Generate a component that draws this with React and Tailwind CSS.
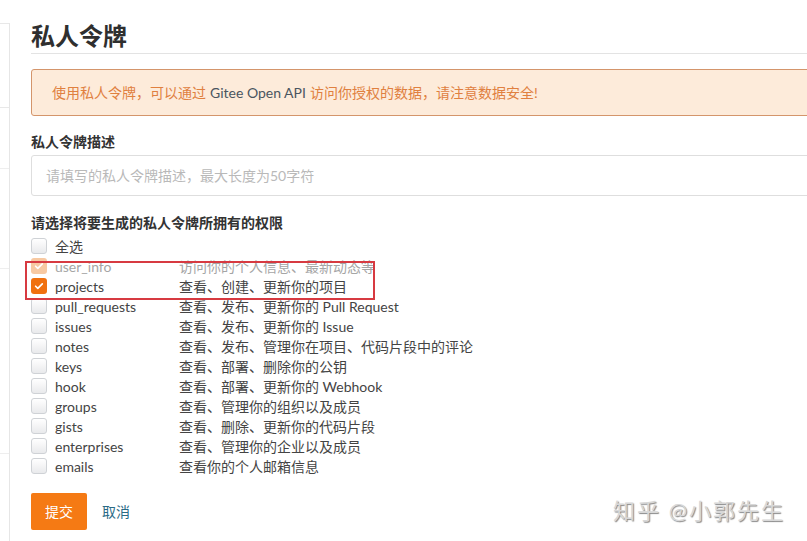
import React from "react";

const scopes = [
  { name: "user_info", desc: "访问你的个人信息、最新动态等", disabled: true, checked: true },
  { name: "projects", desc: "查看、创建、更新你的项目", checked: true },
  { name: "pull_requests", desc: "查看、发布、更新你的 Pull Request" },
  { name: "issues", desc: "查看、发布、更新你的 Issue" },
  { name: "notes", desc: "查看、发布、管理你在项目、代码片段中的评论" },
  { name: "keys", desc: "查看、部署、删除你的公钥" },
  { name: "hook", desc: "查看、部署、更新你的 Webhook" },
  { name: "groups", desc: "查看、管理你的组织以及成员" },
  { name: "gists", desc: "查看、删除、更新你的代码片段" },
  { name: "enterprises", desc: "查看、管理你的企业以及成员" },
  { name: "emails", desc: "查看你的个人邮箱信息" },
];

const Box = ({ checked, disabled }) => {
  if (checked) {
    return (
      <span
        className={`flex h-4 w-4 shrink-0 items-center justify-center rounded-[3px] ${
          disabled ? "bg-[#f7c9a2]" : "bg-[#f0700f]"
        }`}
      >
        <svg viewBox="0 0 16 16" className="h-3 w-3">
          <path
            d="M3.5 8.3l2.9 2.8 6-6"
            fill="none"
            stroke="#fff"
            strokeWidth="2.2"
            strokeLinecap="round"
            strokeLinejoin="round"
          />
        </svg>
      </span>
    );
  }
  return (
    <span className="h-4 w-4 shrink-0 rounded-[3px] border border-[#cfd2d6] bg-gradient-to-b from-white to-[#e9eaec]" />
  );
};

const Row = ({ name, desc, checked, disabled }) => (
  <div className="flex h-5 items-center">
    <Box checked={checked} disabled={disabled} />
    <span className={`ml-2 w-[124px] ${disabled ? "text-[#a5a5a5]" : "text-[#444]"}`}>{name}</span>
    <span className={disabled ? "text-[#a5a5a5]" : "text-[#444]"}>{desc}</span>
  </div>
);

export default function App() {
  return (
    <div
      className="relative flex h-[541px] w-[807px] overflow-hidden bg-white text-[14px]"
      style={{ fontFamily: 'Lato, "Noto Sans CJK SC", sans-serif' }}
    >
      <aside className="mt-[23px] flex w-[10px] shrink-0 flex-col border-r border-[#e6e6e6]">
        <div className="h-[85px] border-y border-[#e8e8e8]" />
        <div className="mt-[60px] h-[100px] border-t border-[#eee]" />
        <div className="h-[185px] border-t border-[#eee]" />
        <div className="border-t border-[#eee]" />
      </aside>

      <main className="relative ml-[21px] flex-1">
        <h1 className="pt-[19px] text-[24px] font-bold leading-[34px] text-[#2f2f2f]">私人令牌</h1>
        <div className="border-b border-[#e3e3e3]" />

        <div className="mt-[15px] -mr-4 flex h-[47px] items-center rounded-[3px] border border-[#d4956b] bg-[#fdebda] pl-[20px] text-[#e0803f]">
          使用私人令牌，可以通过<span className="mx-1 text-[#4a5560]">Gitee Open API</span>访问你授权的数据，请注意数据安全!
        </div>

        <div className="mt-[16px] font-bold leading-5 text-[#333]">私人令牌描述</div>
        <div className="mt-[3px] -mr-4 flex h-[41px] items-center rounded-[3px] border border-[#dedede] pl-[14px] text-[#b9b9b9]">
          请填写的私人令牌描述，最大长度为50字符
        </div>

        <div className="mt-[17px] font-bold leading-5 text-[#333]">请选择将要生成的私人令牌所拥有的权限</div>

        <div className="relative mt-[3px]">
          <div className="flex h-5 items-center">
            <Box />
            <span className="ml-2 text-[#444]">全选</span>
          </div>
          {scopes.map((s) => (
            <Row key={s.name} {...s} />
          ))}
          <div className="pointer-events-none absolute left-[-6px] top-[25px] h-[39px] w-[350px] border-2 border-[#d73a41]" />
        </div>

        <div className="mt-[17px] flex items-center">
          <button className="h-[37px] w-[56px] rounded-[2px] bg-[#f57a14] text-white">提交</button>
          <button className="ml-[15px] text-[#2a6b86]">取消</button>
        </div>
      </main>

      <div
        className="absolute left-[613px] top-[494px] text-[22px] tracking-[2px] text-[#d8d8d8]"
        style={{ textShadow: "1px 1px 1px #888" }}
      >
        知乎 @小郭先生
      </div>
    </div>
  );
}
